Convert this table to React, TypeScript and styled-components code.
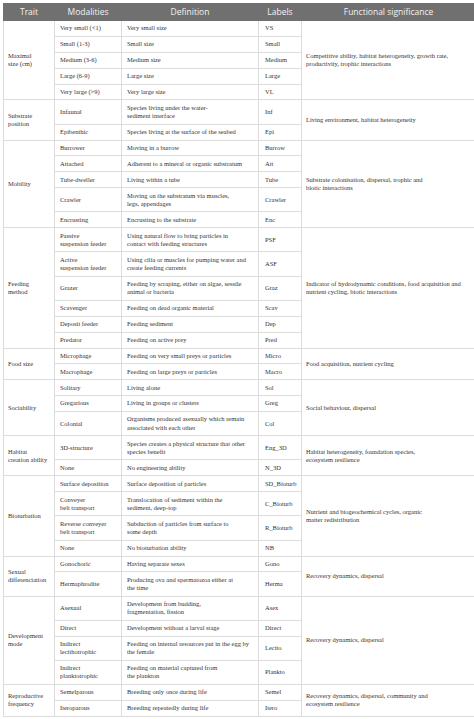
import React from 'react';
import styled, { createGlobalStyle } from 'styled-components';

type Row = { mod: string; def: string; label: string };
type Group = { trait: string; rows: Row[]; sig: string };

const groups: Group[] = [
  {
    trait: 'Maximal\nsize (cm)',
    sig: 'Competitive ability, habitat heterogeneity, growth rate,\nproductivity, trophic interactions',
    rows: [
      { mod: 'Very small (<1)', def: 'Very small size', label: 'VS' },
      { mod: 'Small (1-3)', def: 'Small size', label: 'Small' },
      { mod: 'Medium (3-6)', def: 'Medium size', label: 'Medium' },
      { mod: 'Large (6-9)', def: 'Large size', label: 'Large' },
      { mod: 'Very large (>9)', def: 'Very large size', label: 'VL' },
    ],
  },
  {
    trait: 'Substrate\nposition',
    sig: 'Living environment, habitat heterogeneity',
    rows: [
      { mod: 'Infaunal', def: 'Species living under the water-\nsediment interface', label: 'Inf' },
      { mod: 'Epibenthic', def: 'Species living at the surface of the seabed', label: 'Epi' },
    ],
  },
  {
    trait: 'Mobility',
    sig: 'Substrate colonisation, dispersal, trophic and\nbiotic interactions',
    rows: [
      { mod: 'Burrower', def: 'Moving in a burrow', label: 'Burrow' },
      { mod: 'Attached', def: 'Adherent to a mineral or organic substratum', label: 'Att' },
      { mod: 'Tube-dweller', def: 'Living within a tube', label: 'Tube' },
      { mod: 'Crawler', def: 'Moving on the substratum via muscles,\nlegs, appendages', label: 'Crawler' },
      { mod: 'Encrusting', def: 'Encrusting to the substrate', label: 'Enc' },
    ],
  },
  {
    trait: 'Feeding\nmethod',
    sig: 'Indicator of hydrodynamic conditions, food acquisition and\nnutrient cycling, biotic interactions',
    rows: [
      { mod: 'Passive\nsuspension feeder', def: 'Using natural flow to bring particles in\ncontact with feeding structures', label: 'PSF' },
      { mod: 'Active\nsuspension feeder', def: 'Using cilia or muscles for pumping water and\ncreate feeding currents', label: 'ASF' },
      { mod: 'Grazer', def: 'Feeding by scraping, either on algae, sessile\nanimal or bacteria', label: 'Graz' },
      { mod: 'Scavenger', def: 'Feeding on dead organic material', label: 'Scav' },
      { mod: 'Deposit feeder', def: 'Feeding sediment', label: 'Dep' },
      { mod: 'Predator', def: 'Feeding on active prey', label: 'Pred' },
    ],
  },
  {
    trait: 'Food size',
    sig: 'Food acquisition, nutrient cycling',
    rows: [
      { mod: 'Microphage', def: 'Feeding on very small preys or particles', label: 'Micro' },
      { mod: 'Macrophage', def: 'Feeding on large preys or particles', label: 'Macro' },
    ],
  },
  {
    trait: 'Sociability',
    sig: 'Social behaviour, dispersal',
    rows: [
      { mod: 'Solitary', def: 'Living alone', label: 'Sol' },
      { mod: 'Gregarious', def: 'Living in groups or clusters', label: 'Greg' },
      { mod: 'Colonial', def: 'Organisms produced asexually which remain\nassociated with each other', label: 'Col' },
    ],
  },
  {
    trait: 'Habitat\ncreation ability',
    sig: 'Habitat heterogeneity, foundation species,\necosystem resilience',
    rows: [
      { mod: '3D-structure', def: 'Species creates a physical structure that other\nspecies benefit', label: 'Eng_3D' },
      { mod: 'None', def: 'No engineering ability', label: 'N_3D' },
    ],
  },
  {
    trait: 'Bioturbation',
    sig: 'Nutrient and biogeochemical cycles, organic\nmatter redistribution',
    rows: [
      { mod: 'Surface deposition', def: 'Surface deposition of particles', label: 'SD_Bioturb' },
      { mod: 'Conveyer\nbelt transport', def: 'Translocation of sediment within the\nsediment, deep-top', label: 'C_Bioturb' },
      { mod: 'Reverse conveyer\nbelt transport', def: 'Subduction of particles from surface to\nsome depth', label: 'R_Bioturb' },
      { mod: 'None', def: 'No bioturbation ability', label: 'NB' },
    ],
  },
  {
    trait: 'Sexual\ndifferenciation',
    sig: 'Recovery dynamics, dispersal',
    rows: [
      { mod: 'Gonochoric', def: 'Having separate sexes', label: 'Gono' },
      { mod: 'Hermaphrodite', def: 'Producing ova and spermatozoa either at\nthe time', label: 'Herma' },
    ],
  },
  {
    trait: 'Development\nmode',
    sig: 'Recovery dynamics, dispersal',
    rows: [
      { mod: 'Asexual', def: 'Development from budding,\nfragmentation, fission', label: 'Asex' },
      { mod: 'Direct', def: 'Development without a larval stage', label: 'Direct' },
      { mod: 'Indirect\nlecithotrophic', def: 'Feeding on internal resources put in the egg by\nthe female', label: 'Lecito' },
      { mod: 'Indirect\nplanktotrophic', def: 'Feeding on material captured from\nthe plankton', label: 'Plankto' },
    ],
  },
  {
    trait: 'Reproductive\nfrequency',
    sig: 'Recovery dynamics, dispersal, community and\necosystem resilience',
    rows: [
      { mod: 'Semelparous', def: 'Breeding only once during life', label: 'Semel' },
      { mod: 'Iteroparous', def: 'Breeding repeatedly during life', label: 'Itero' },
    ],
  },
];

const GlobalStyle = createGlobalStyle`
  html, body {
    margin: 0;
    padding: 0;
    background: #ffffff;
  }
`;

const Page = styled.div`
  padding: 3px 4px 0 3px;
`;

const Table = styled.table`
  width: 467px;
  border-collapse: collapse;
  table-layout: fixed;
  font-family: "Liberation Serif", "DejaVu Serif", serif;
  font-size: 6.5px;
  line-height: 8.3px;
  color: #333333;
`;

const HeadCell = styled.th<{ $w: number }>`
  width: ${p => p.$w}px;
  height: 16px;
  padding: 0;
  background: #707070;
  color: #f2f2f2;
  font-family: "Open Sans", "Liberation Sans", sans-serif;
  font-weight: 400;
  font-size: 8.5px;
  text-align: center;
  vertical-align: middle;
  border: 1px solid #707070;
`;

const Cell = styled.td<{ $pad?: number }>`
  padding: 3.3px ${p => p.$pad ?? 5}px;
  border: 1px solid #dcdcdc;
  vertical-align: middle;
  white-space: pre-line;
  overflow: hidden;
`;

const App = () => (
  <Page>
    <GlobalStyle />
    <Table>
      <thead>
        <tr>
          <HeadCell $w={50}>Trait</HeadCell>
          <HeadCell $w={66}>Modalities</HeadCell>
          <HeadCell $w={136}>Definition</HeadCell>
          <HeadCell $w={42}>Labels</HeadCell>
          <HeadCell $w={173}>Functional significance</HeadCell>
        </tr>
      </thead>
      <tbody>
        {groups.map(g =>
          g.rows.map((r, i) => (
            <tr key={g.trait + r.label}>
              {i === 0 && <Cell rowSpan={g.rows.length} $pad={4}>{g.trait}</Cell>}
              <Cell>{r.mod}</Cell>
              <Cell>{r.def}</Cell>
              <Cell $pad={6}>{r.label}</Cell>
              {i === 0 && <Cell rowSpan={g.rows.length} $pad={4}>{g.sig}</Cell>}
            </tr>
          ))
        )}
      </tbody>
    </Table>
  </Page>
);

export default App;
